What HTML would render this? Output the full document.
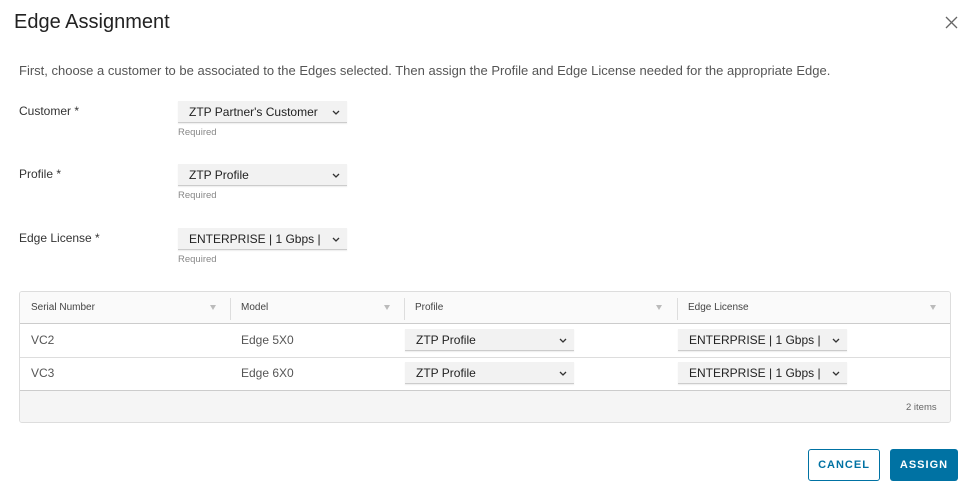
<!DOCTYPE html><html><head><style>
*{box-sizing:border-box;margin:0;padding:0}
body{width:972px;height:493px;background:#fff;font-family:"Liberation Sans",sans-serif;color:#333;position:relative;overflow:hidden}
.a{position:absolute}
.sel{position:absolute;background:#f2f2f2;border-bottom:1px solid #ccc;box-shadow:0 1px 1px rgba(0,0,0,.08);font-size:12px;color:#222;line-height:22px;height:22px;white-space:nowrap}
.sel span{position:absolute;left:11px;right:24px;top:0;overflow:hidden}
.sel svg{position:absolute;right:7px;top:9px}
.lbl{font-size:12px;color:#333;position:absolute;left:19px}
.req{font-size:9.5px;color:#888;position:absolute;left:178px}
.th{position:absolute;font-size:10px;color:#444;top:302px}
.flt{position:absolute;top:305px;width:0;height:0;border-left:3.5px solid transparent;border-right:3.5px solid transparent;border-top:5px solid #bbb}
.td{position:absolute;font-size:12px;color:#555}
.vs{position:absolute;top:298px;width:1px;height:22px;background:#ddd}
</style></head><body>
<div class="a" style="left:14px;top:11px;font-size:20px;color:#222">Edge Assignment</div>
<svg class="a" style="left:945px;top:16px" width="13" height="13"><path d="M1 1L12 12M12 1L1 12" stroke="#666" stroke-width="1.3"/></svg>
<div class="a" style="left:19px;top:63px;font-size:13px;color:#555;white-space:nowrap">First, choose a customer to be associated to the Edges selected. Then assign the Profile and Edge License needed for the appropriate Edge.</div>

<div class="lbl" style="top:104px">Customer *</div>
<div class="sel" style="left:178px;top:101px;width:169px"><span>ZTP Partner's Customer</span><svg width="8" height="5"><path d="M1 1L4 4L7 1" stroke="#333" fill="none" stroke-width="1.3"/></svg></div>
<div class="req" style="top:127px">Required</div>

<div class="lbl" style="top:167px">Profile *</div>
<div class="sel" style="left:178px;top:164px;width:169px"><span>ZTP Profile</span><svg width="8" height="5"><path d="M1 1L4 4L7 1" stroke="#333" fill="none" stroke-width="1.3"/></svg></div>
<div class="req" style="top:190px">Required</div>

<div class="lbl" style="top:231px">Edge License *</div>
<div class="sel" style="left:178px;top:228px;width:169px"><span>ENTERPRISE | 1 Gbps | Large</span><svg width="8" height="5"><path d="M1 1L4 4L7 1" stroke="#333" fill="none" stroke-width="1.3"/></svg></div>
<div class="req" style="top:254px">Required</div>

<div class="a" style="left:19px;top:291px;width:932px;height:132px;border:1px solid #ddd;border-radius:3px;overflow:hidden">
<div class="a" style="left:0;top:0;width:100%;height:32px;background:#fafafa;border-bottom:1px solid #ccc"></div>
<div class="a" style="left:0;top:65px;width:100%;height:1px;background:#ddd"></div>
<div class="a" style="left:0;top:98px;width:100%;height:33px;background:#f5f5f5;border-top:1px solid #ccc"></div>
</div>
<div class="vs" style="left:230px"></div><div class="vs" style="left:404px"></div><div class="vs" style="left:677px"></div>
<div class="th" style="left:31px">Serial Number</div><div class="flt" style="left:210px"></div>
<div class="th" style="left:241px">Model</div><div class="flt" style="left:384px"></div>
<div class="th" style="left:415px">Profile</div><div class="flt" style="left:656px"></div>
<div class="th" style="left:688px">Edge License</div><div class="flt" style="left:930px"></div>
<div class="td" style="left:31px;top:333px">VC2</div><div class="td" style="left:241px;top:333px">Edge 5X0</div>
<div class="td" style="left:31px;top:366px">VC3</div><div class="td" style="left:241px;top:366px">Edge 6X0</div>
<div class="sel" style="left:405px;top:329px;width:169px"><span>ZTP Profile</span><svg width="8" height="5"><path d="M1 1L4 4L7 1" stroke="#333" fill="none" stroke-width="1.3"/></svg></div>
<div class="sel" style="left:405px;top:362px;width:169px"><span>ZTP Profile</span><svg width="8" height="5"><path d="M1 1L4 4L7 1" stroke="#333" fill="none" stroke-width="1.3"/></svg></div>
<div class="sel" style="left:678px;top:329px;width:169px"><span>ENTERPRISE | 1 Gbps | Large</span><svg width="8" height="5"><path d="M1 1L4 4L7 1" stroke="#333" fill="none" stroke-width="1.3"/></svg></div>
<div class="sel" style="left:678px;top:362px;width:169px"><span>ENTERPRISE | 1 Gbps | Large</span><svg width="8" height="5"><path d="M1 1L4 4L7 1" stroke="#333" fill="none" stroke-width="1.3"/></svg></div>
<div class="a" style="left:906px;top:402px;font-size:9.5px;color:#666">2 items</div>

<div class="a" style="left:808px;top:449px;width:72px;height:32px;border:1px solid #0072a3;border-radius:3px;color:#0072a3;font-size:11px;font-weight:bold;letter-spacing:1px;text-align:center;line-height:30px">CANCEL</div>
<div class="a" style="left:890px;top:449px;width:68px;height:32px;background:#0072a3;border-radius:3px;color:#fff;font-size:11px;font-weight:bold;letter-spacing:1px;text-align:center;line-height:32px">ASSIGN</div>
</body></html>
